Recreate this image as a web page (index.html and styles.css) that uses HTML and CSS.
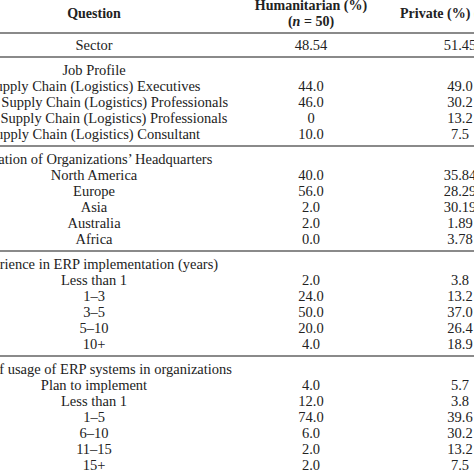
FILE: index.html
```html
<!DOCTYPE html>
<html>
<head>
<meta charset="utf-8">
<link rel="stylesheet" href="styles.css">
</head>
<body>
<table class="survey">
  <colgroup>
    <col class="c-question">
    <col class="c-hum">
    <col class="c-priv">
  </colgroup>
  <thead>
    <tr>
      <th>Question</th>
      <th>Humanitarian (%)<br>(<i>n</i> = 50)</th>
      <th>Private (%) (<i>n</i> = 53)</th>
    </tr>
  </thead>
  <tbody class="sec single">
    <tr><td>Sector</td><td>48.54</td><td>51.45</td></tr>
  </tbody>
  <tbody class="sec">
    <tr><td>Job Profile</td><td></td><td></td></tr>
    <tr><td>Supply Chain (Logistics) Executives</td><td>44.0</td><td>49.0</td></tr>
    <tr><td>Senior Supply Chain (Logistics) Professionals</td><td>46.0</td><td>30.2</td></tr>
    <tr><td>Junior Supply Chain (Logistics) Professionals</td><td>0</td><td>13.2</td></tr>
    <tr><td>Supply Chain (Logistics) Consultant</td><td>10.0</td><td>7.5</td></tr>
  </tbody>
  <tbody class="sec">
    <tr><td>Location of Organizations’ Headquarters</td><td></td><td></td></tr>
    <tr><td>North America</td><td>40.0</td><td>35.84</td></tr>
    <tr><td>Europe</td><td>56.0</td><td>28.29</td></tr>
    <tr><td>Asia</td><td>2.0</td><td>30.19</td></tr>
    <tr><td>Australia</td><td>2.0</td><td>1.89</td></tr>
    <tr><td>Africa</td><td>0.0</td><td>3.78</td></tr>
  </tbody>
  <tbody class="sec">
    <tr><td>Experience in ERP implementation (years)</td><td></td><td></td></tr>
    <tr><td>Less than 1</td><td>2.0</td><td>3.8</td></tr>
    <tr><td>1–3</td><td>24.0</td><td>13.2</td></tr>
    <tr><td>3–5</td><td>50.0</td><td>37.0</td></tr>
    <tr><td>5–10</td><td>20.0</td><td>26.4</td></tr>
    <tr><td>10+</td><td>4.0</td><td>18.9</td></tr>
  </tbody>
  <tbody class="sec">
    <tr><td>Years of usage of ERP systems in organizations</td><td></td><td></td></tr>
    <tr><td>Plan to implement</td><td>4.0</td><td>5.7</td></tr>
    <tr><td>Less than 1</td><td>12.0</td><td>3.8</td></tr>
    <tr><td>1–5</td><td>74.0</td><td>39.6</td></tr>
    <tr><td>6–10</td><td>6.0</td><td>30.2</td></tr>
    <tr><td>11–15</td><td>2.0</td><td>13.2</td></tr>
    <tr><td>15+</td><td>2.0</td><td>7.5</td></tr>
  </tbody>
</table>
</body>
</html>
```
FILE: styles.css
```css
html, body {
  margin: 0;
  padding: 0;
  overflow: hidden;
  background: #fff;
}

.survey {
  margin-top: -7px;
  margin-left: -60px;
  width: 606px;
  table-layout: fixed;
  border-collapse: separate;
  border-spacing: 0;
  font-family: "Liberation Serif", "Times New Roman", serif;
  font-size: 14.5px;
  line-height: 16px;
  color: #222;
}

.c-question { width: 308px; }
.c-hum { width: 126px; }
.c-priv { width: 172px; }

.survey th,
.survey td {
  padding: 0;
  text-align: center;
  white-space: nowrap;
  vertical-align: middle;
}

.survey th {
  font-size: 14px;
  font-weight: bold;
  padding: 5px 0 2px;
  border-bottom: 2px solid #8a8a8a;
}

.sec tr:first-child td {
  padding-top: 4px;
}

.sec tr:last-child td {
  padding-bottom: 3px;
  border-bottom: 2px solid #8a8a8a;
}

.sec.single tr td {
  padding-top: 3px;
}
```
